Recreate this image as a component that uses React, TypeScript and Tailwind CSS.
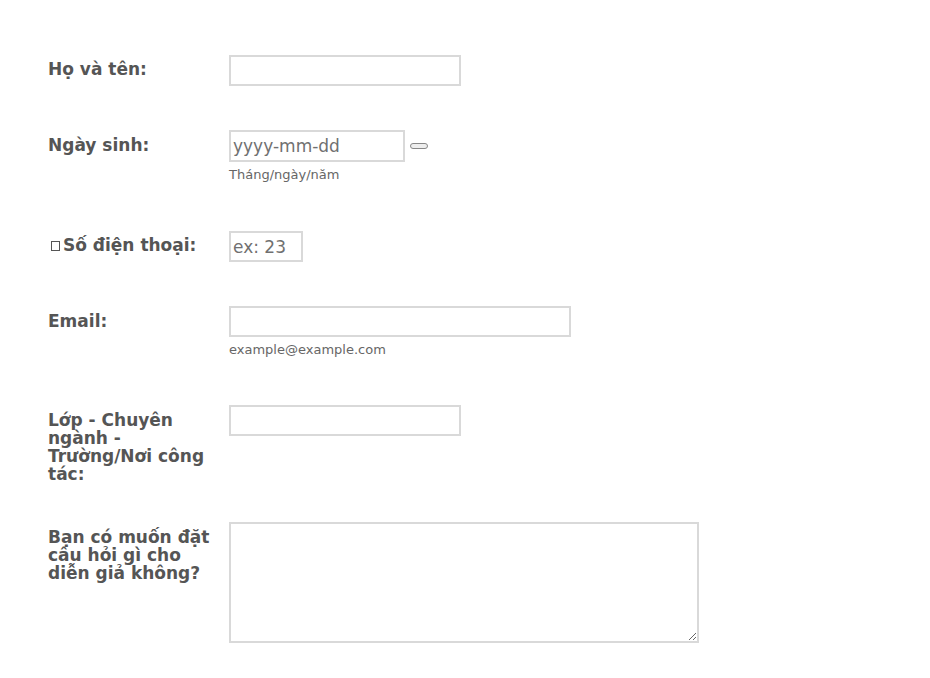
const labelCls =
  "w-[181px] shrink-0 pr-[10px] font-bold text-[17px] leading-[18px] text-[#555] font-['DejaVu_Sans','Verdana',sans-serif]";
const inputCls =
  "h-[31px] border-2 border-[#d9d9d9] bg-white px-[2px] text-[17px] text-[#666] placeholder:text-[#707070] outline-none font-['DejaVu_Sans','Verdana',sans-serif]";
const helpCls =
  "mt-[5px] text-[13px] leading-[16px] text-[#666] font-['DejaVu_Sans','Verdana',sans-serif]";

export default function App() {
  return (
    <div className="min-h-[678px] w-[930px] bg-white pl-[48px] pt-[55px]">
      {/* Họ và tên */}
      <div className="flex">
        <label className={labelCls + " pt-[5px]"}>Họ và tên:</label>
        <input className={inputCls + " w-[232px]"} />
      </div>

      {/* Ngày sinh */}
      <div className="mt-[44px] flex">
        <label className={labelCls + " pt-[6px]"}>Ngày sinh:</label>
        <div>
          <div className="flex items-center">
            <input
              className={inputCls + " h-[32px] w-[176px]"}
              placeholder="yyyy-mm-dd"
            />
            <span className="ml-[5px] h-[6px] w-[18px] rounded-full border border-[#888] bg-[#eee]" />
          </div>
          <div className={helpCls}>Tháng/ngày/năm</div>
        </div>
      </div>

      {/* Số điện thoại */}
      <div className="mt-[48px] flex">
        <label className={labelCls + " pt-[5px]"}>
          <span className="ml-[3px] mr-[3px] inline-block h-[10px] w-[9px] border-[1.5px] border-[#555]" />
          Số điện thoại:
        </label>
        <input className={inputCls + " w-[74px]"} placeholder="ex: 23" />
      </div>

      {/* Email */}
      <div className="mt-[44px] flex">
        <label className={labelCls + " pt-[6px]"}>Email:</label>
        <div>
          <input className={inputCls + " w-[342px]"} />
          <div className={helpCls}>example@example.com</div>
        </div>
      </div>

      {/* Lớp */}
      <div className="mt-[47px] flex">
        <label className={labelCls + " pt-[6px]"}>
          Lớp - Chuyên ngành - Trường/Nơi công tác:
        </label>
        <input className={inputCls + " w-[232px]"} />
      </div>

      {/* Câu hỏi */}
      <div className="mt-[39px] flex">
        <label className={labelCls + " pr-[16px] pt-[6px] text-[16px]"}>
          Bạn có muốn đặt câu hỏi gì cho diễn giả không?
        </label>
        <textarea className="h-[121px] w-[470px] border-2 border-[#d9d9d9] bg-white outline-none" />
      </div>
    </div>
  );
}
